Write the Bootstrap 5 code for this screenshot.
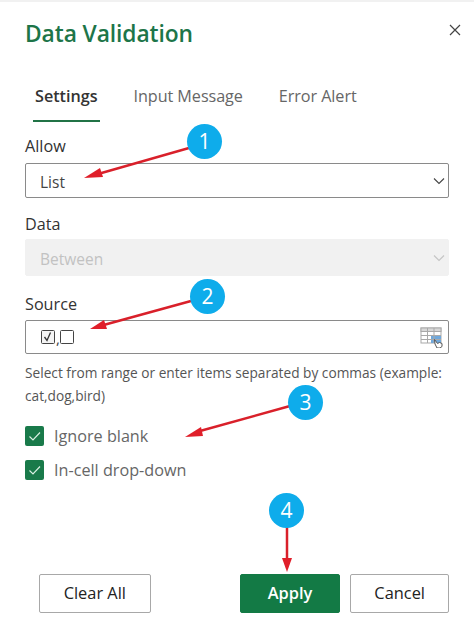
<!DOCTYPE html>
<html lang="en">
<head>
<meta charset="utf-8">
<title>Data Validation</title>
<link href="https://cdn.jsdelivr.net/npm/bootstrap@5.3.0/dist/css/bootstrap.min.css" rel="stylesheet">
<style>
html,body{height:100%;overflow:hidden}
body{background:#fff;font-family:"Open Sans","Liberation Sans",sans-serif;color:#333}
.dlg{position:relative;width:474px;height:634px;border-top:2px solid #f1f1f1;padding:0 25px;overflow:hidden}
.dv-close{position:absolute;left:448px;top:14px;width:14px;height:14px;display:block;padding:0;border:0;background:none}
.dv-title{font-size:22.800px;font-weight:600;color:#1d7549;margin:0;padding-top:16px;line-height:32px;letter-spacing:-.1px}
.dv-tabs{margin:35px 0 0 8px;gap:32px;border:0;height:38px}
.dv-tabs .nav-link{font-size:16.200px;line-height:22px;padding:0 2px 13px;border:0;border-radius:0;color:#666;background:none;letter-spacing:-.07px}
.dv-tabs .nav-link.active{color:#333;font-weight:600;border-bottom:2px solid #217346;letter-spacing:-.02px}
.dv-label{display:block;font-size:16.200px;line-height:22px;color:#333;font-weight:500;margin:0;letter-spacing:0}
.dv-first{margin-top:12px}
.dv-first+select{margin-top:6px}
.dv-l2{margin-top:15px}.dv-l2+select{margin-top:4px}
.dv-l3{margin-top:17px}.dv-l3+div{margin-top:5px}
.dv-select,.dv-input{height:35px;border:1px solid #8a8a8a;border-radius:2px;font-size:15.500px;color:#444;padding:4px 0 0 14px;box-shadow:none;background-color:#fff;font-family:inherit}
.dv-select{background-image:url("data:image/svg+xml,%3csvg xmlns='http://www.w3.org/2000/svg' viewBox='0 0 12 8'%3e%3cpath fill='none' stroke='%23444' stroke-width='1.1' d='M1 1.5l5 5 5-5'/%3e%3c/svg%3e");background-position:right 3px center;background-size:12px 8px}
.dv-select:disabled{background-color:#f1f1f1;border-color:#f1f1f1;color:#c2c2c2;height:37px;background-image:url("data:image/svg+xml,%3csvg xmlns='http://www.w3.org/2000/svg' viewBox='0 0 12 8'%3e%3cpath fill='none' stroke='%23c4c4c4' stroke-width='1.1' d='M1 1.5l5 5 5-5'/%3e%3c/svg%3e");opacity:1}
.dv-input{height:34px;display:flex;align-items:center;justify-content:space-between;padding:0 5px 0 15px}
.dv-glyphs{display:flex;align-items:center;line-height:1}
.dv-comma{font-size:15px;margin:3px 0 0 1px;color:#444}
.dv-help{font-size:13.700px;line-height:23px;color:#555;margin:7px 0 0;width:424px;white-space:nowrap}
.dv-check{display:flex;align-items:center;gap:10px;font-size:16.200px;color:#666;height:20px;letter-spacing:0}
.dv-box{width:19px;height:20px;border-radius:2px;background:#197a4a;flex:none;display:block}
.dv-checks{gap:14px;margin-top:19px}
.dv-btn{height:39px;border-radius:2px;font-size:16.400px;font-weight:500;padding:0;display:flex;align-items:center;justify-content:center;letter-spacing:0}
.dv-plain{background:#fff;border:1px solid #a8a8a8;color:#222}
.dv-go{background:#137a45;border:1px solid #137a45;color:#fff;font-weight:600}
.dv-foot{margin-top:94px;padding-left:14px}
.dv-clear{width:112px;margin-right:89px}
.dv-go{width:101px;margin-right:10px}
.dv-cancel{width:99px}
.dv-marks{position:absolute;left:0;top:-2px;width:474px;height:634px;pointer-events:none}
.dv-pin{position:absolute;width:35px;height:35px;border-radius:50%;background:#0eaceb;color:#fff;font-size:21px;line-height:34px;text-align:center}
.dv-p1{left:187px;top:122px}.dv-p2{left:190px;top:277px}.dv-p3{left:288px;top:383px}.dv-p4{left:269px;top:491px}
</style>
</head>
<body>
<div class="dlg">
  <button class="dv-close" type="button" aria-label="Close"><svg width="14" height="14" viewBox="0 0 14 14"><path d="M2 2l10 10M12 2L2 12" stroke="#444" stroke-width="1.2" fill="none"/></svg></button>
  <h1 class="dv-title">Data Validation</h1>
  <ul class="nav dv-tabs">
    <li class="nav-item"><a class="nav-link active" href="#">Settings</a></li>
    <li class="nav-item"><a class="nav-link" href="#">Input Message</a></li>
    <li class="nav-item"><a class="nav-link" href="#">Error Alert</a></li>
  </ul>
  <label class="dv-label dv-first">Allow</label>
  <select class="form-select dv-select"><option>List</option></select>
  <label class="dv-label dv-l2">Data</label>
  <select class="form-select dv-select" disabled><option>Between</option></select>
  <label class="dv-label dv-l3">Source</label>
  <div class="form-control dv-input">
    <span class="dv-glyphs">
      <svg width="14" height="14" viewBox="0 0 14 14"><rect x=".5" y=".5" width="13" height="13" rx="1" fill="#f4f4f4" stroke="#444" stroke-width="1"/><path d="M3.500 7l2.500 3.500L9.500 2.500" fill="none" stroke="#333" stroke-width="1.300"/></svg><span class="dv-comma">,</span><svg width="14" height="14" viewBox="0 0 14 14"><rect x=".5" y=".5" width="13" height="13" rx="1" fill="#fff" stroke="#444" stroke-width="1"/></svg>
    </span>
    <svg width="23" height="21" viewBox="0 0 23 21"><rect x="1" y="1" width="20" height="15" fill="#fff" stroke="#a9a9a9"/><rect x="1" y="1" width="20" height="3.500" fill="#d8d8d8" stroke="#a9a9a9"/><rect x="11" y="8" width="10" height="8" fill="#6fa8dc"/><path d="M1 8.500h20M1 12.500h20M7.500 1v15M14 1v15" stroke="#a9a9a9" fill="none"/><path d="M14.500 12.500l3 4 2-1 2.500 1v3l-2 1.500h-3l-2-4z" fill="#fff" stroke="#555"/></svg>
  </div>
  <p class="dv-help">Select from range or enter items separated by commas (example:<br>cat,dog,bird)</p>
  <div class="d-flex flex-column dv-checks">
    <label class="dv-check"><svg class="dv-box" viewBox="0 0 19 20"><path d="M4.500 10.500l3.500 3.500 7-7.500" fill="none" stroke="#d8efe2" stroke-width="1.200"/></svg>Ignore blank</label>
    <label class="dv-check"><svg class="dv-box" viewBox="0 0 19 20"><path d="M4.500 10.500l3.500 3.500 7-7.500" fill="none" stroke="#d8efe2" stroke-width="1.200"/></svg>In-cell drop-down</label>
  </div>
  <div class="d-flex dv-foot">
    <button class="btn dv-btn dv-plain dv-clear" type="button">Clear All</button>
    <button class="btn dv-btn dv-go" type="button">Apply</button>
    <button class="btn dv-btn dv-plain dv-cancel" type="button">Cancel</button>
  </div>
  <svg class="dv-marks" viewBox="0 0 474 634">
    <g fill="none" stroke="#d9202a" stroke-width="2.500"><path d="M189 148L98 174"/><path d="M191 301L100 326"/><path d="M290 406L200 431"/><path d="M287 527V563"/></g>
    <g fill="#e01f2a"><path d="M84 178l16-10 3 9z"/><path d="M90 329l14-9 3 9z"/><path d="M185 437l16-10 2 9z"/><path d="M287 572l-5-14h10z"/></g>
  </svg>
  <span class="dv-pin dv-p1">1</span><span class="dv-pin dv-p2">2</span><span class="dv-pin dv-p3">3</span><span class="dv-pin dv-p4">4</span>
</div>
</body>
</html>
